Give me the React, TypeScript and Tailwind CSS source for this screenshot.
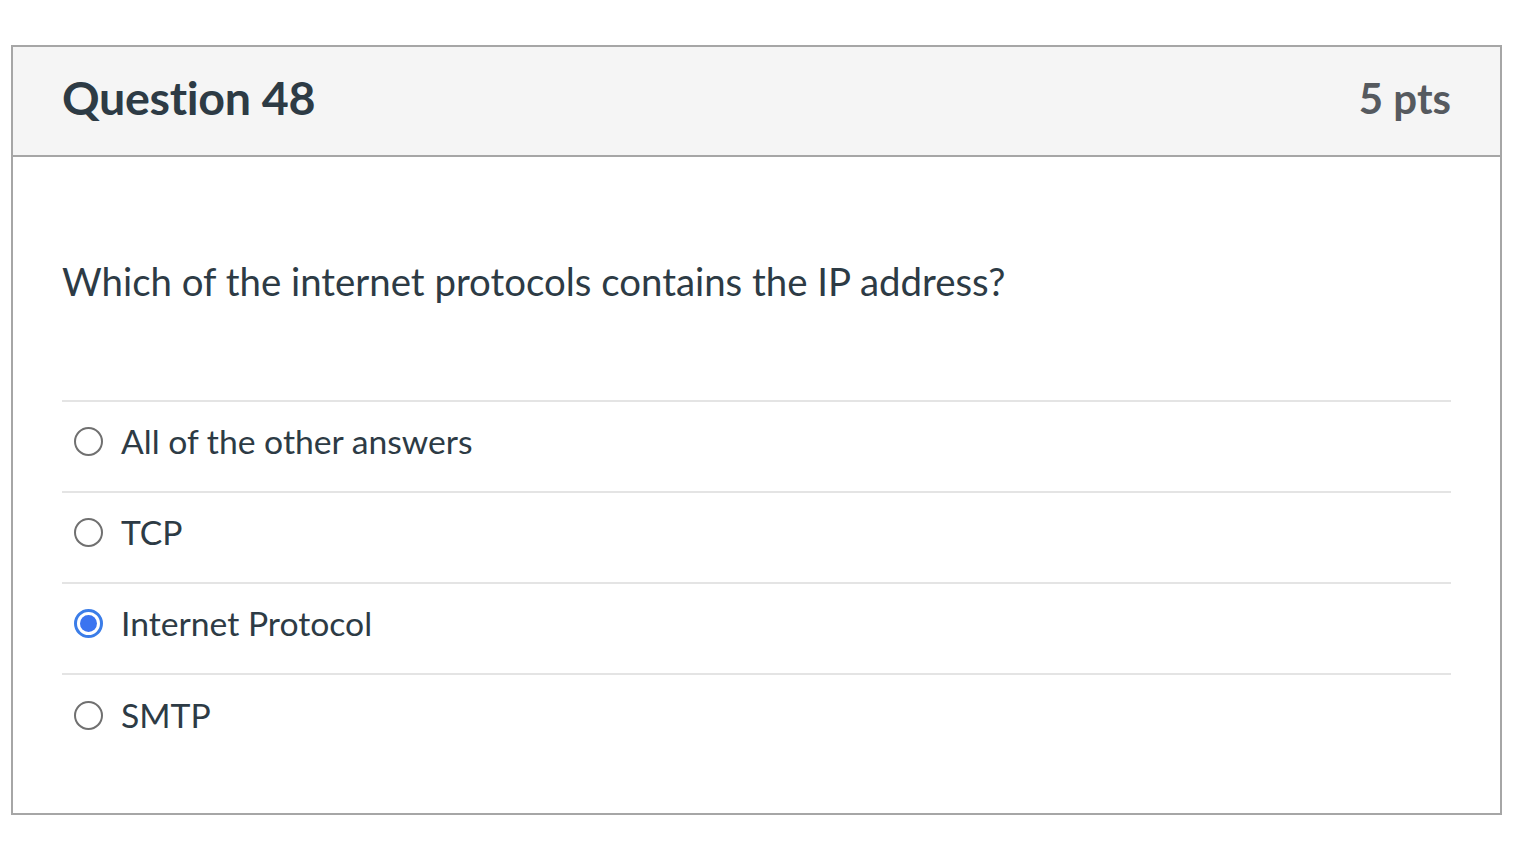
import React from "react";

const answers = [
  { label: "All of the other answers", checked: false },
  { label: "TCP", checked: false },
  { label: "Internet Protocol", checked: true },
  { label: "SMTP", checked: false },
];

function Radio({ checked }: { checked: boolean }) {
  return checked ? (
    <span className="flex h-[29px] w-[29px] shrink-0 items-center justify-center rounded-full border-[3px] border-[#3b7de8] bg-white">
      <span className="h-[17px] w-[17px] rounded-full bg-[#3b74f0]" />
    </span>
  ) : (
    <span className="h-[29px] w-[29px] shrink-0 rounded-full border-[2.5px] border-[#707070] bg-white" />
  );
}

export default function App() {
  return (
    <div className="min-h-screen bg-white pl-[11px] pt-[45px]" style={{ fontFamily: "Lato, 'Noto Sans', sans-serif" }}>
      <div className="w-[1491px] border-2 border-[#a6a6a6]">
        <div className="flex h-[110px] items-center justify-between border-b-2 border-[#a6a6a6] bg-[#f5f5f5] px-[49px] pb-[6px]">
          <h2 className="text-[46.6px] font-bold tracking-[-0.3px] text-[#2d3b45]">Question 48</h2>
          <span className="text-[42px] font-bold text-[#565a5f]">5 pts</span>
        </div>
        <div className="px-[49px] pb-[47px] pt-[98px]">
          <p className="text-[38.4px] leading-[52px] text-[#2d3b45]">
            Which of the internet protocols contains the IP address?
          </p>
          <div className="mt-[93px] border-t-2 border-[#e4e4e4]">
            {answers.map((a, i) => (
              <div
                key={a.label}
                className={`flex h-[91px] items-center gap-[18px] pl-[12px] pb-[10px] ${i < answers.length - 1 ? "border-b-2 border-[#e4e4e4]" : ""}`}
              >
                <Radio checked={a.checked} />
                <span className="text-[33.7px] text-[#2d3b45]">{a.label}</span>
              </div>
            ))}
          </div>
        </div>
      </div>
    </div>
  );
}
